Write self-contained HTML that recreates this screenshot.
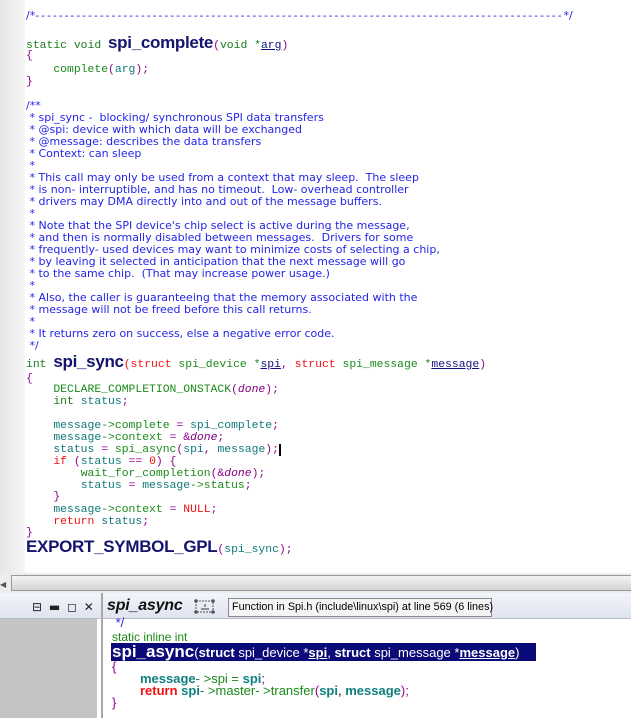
<!DOCTYPE html>
<html><head><meta charset="utf-8"><style>
*{margin:0;padding:0;box-sizing:border-box}
body{width:631px;height:718px;overflow:hidden;background:#fff;position:relative;font-family:"Liberation Mono",monospace}
.g{position:absolute;left:0;top:0;width:25px;height:573px;background:linear-gradient(90deg,#e6e6e6,#f6f6f6)}
.l{position:absolute;left:26px;height:12px;line-height:12px;white-space:pre;font-size:11.4px;font-family:"Liberation Mono",monospace}
.c{font-family:"DejaVu Sans",sans-serif;font-size:11px;color:#2424e8}
.fn{font-family:"Liberation Sans",sans-serif;font-weight:bold;font-size:17px;color:#14146e;letter-spacing:-0.3px}
.kw{color:#1a7a1a}.p{color:#900090}.gr{color:#1a8a1a}.t{color:#107878}.r{color:#f01010}.v{color:#800080;font-style:italic}.u{text-decoration:underline;color:#101080}
.b{position:absolute;font-family:"Liberation Sans",sans-serif;font-size:13px;white-space:pre;line-height:12px;left:112px}
</style></head><body>
<div class="g"></div>
<div class="l c" style="top:10px">/*<span style="letter-spacing:1.9px">------------------------------------------------------------------------------------------</span>*/</div>
<div class="l" style="top:37px"><span class="kw">static void </span><span class="fn">spi_complete</span><span class="p">(</span><span class="kw">void *</span><span class="u">arg</span><span class="p">)</span></div>
<div class="l p" style="top:50px">{</div>
<div class="l" style="top:64px">    <span class="gr">complete</span><span class="p">(</span><span class="t">arg</span><span class="p">);</span></div>
<div class="l p" style="top:76px">}</div>
<div class="l c" style="top:100px">/**</div>
<div class="l c" style="top:112px"> * spi_sync - &nbsp;blocking/ synchronous SPI data transfers</div>
<div class="l c" style="top:124px"> * @spi: device with which data will be exchanged</div>
<div class="l c" style="top:136px"> * @message: describes the data transfers</div>
<div class="l c" style="top:148px"> * Context: can sleep</div>
<div class="l c" style="top:160px"> *</div>
<div class="l c" style="top:172px"> * This call may only be used from a context that may sleep.  The sleep</div>
<div class="l c" style="top:184px"> * is non- interruptible, and has no timeout.  Low- overhead controller</div>
<div class="l c" style="top:196px"> * drivers may DMA directly into and out of the message buffers.</div>
<div class="l c" style="top:208px"> *</div>
<div class="l c" style="top:220px"> * Note that the SPI device's chip select is active during the message,</div>
<div class="l c" style="top:232px"> * and then is normally disabled between messages.  Drivers for some</div>
<div class="l c" style="top:244px"> * frequently- used devices may want to minimize costs of selecting a chip,</div>
<div class="l c" style="top:256px"> * by leaving it selected in anticipation that the next message will go</div>
<div class="l c" style="top:268px"> * to the same chip.  (That may increase power usage.)</div>
<div class="l c" style="top:280px"> *</div>
<div class="l c" style="top:292px"> * Also, the caller is guaranteeing that the memory associated with the</div>
<div class="l c" style="top:304px"> * message will not be freed before this call returns.</div>
<div class="l c" style="top:316px"> *</div>
<div class="l c" style="top:328px"> * It returns zero on success, else a negative error code.</div>
<div class="l c" style="top:340px"> */</div>
<div class="l" style="top:356px"><span class="kw">int </span><span class="fn">spi_sync</span><span class="r">(struct </span><span class="gr">spi_device *</span><span class="u">spi</span><span class="p">, </span><span class="r">struct </span><span class="gr">spi_message *</span><span class="u">message</span><span class="p">)</span></div>
<div class="l p" style="top:373px">{</div>
<div class="l" style="top:384px">    <span class="gr">DECLARE_COMPLETION_ONSTACK</span><span class="p">(</span><span class="v">done</span><span class="p">);</span></div>
<div class="l" style="top:396px">    <span class="kw">int </span><span class="t">status</span><span class="p">;</span></div>
<div class="l" style="top:420px">    <span class="t">message</span><span class="gr">-&gt;complete</span><span class="p"> = </span><span class="t">spi_complete</span><span class="p">;</span></div>
<div class="l" style="top:432px">    <span class="t">message</span><span class="gr">-&gt;context</span><span class="p"> = &amp;</span><span class="v">done</span><span class="p">;</span></div>
<div class="l" style="top:444px">    <span class="t">status</span><span class="p"> = </span><span class="gr">spi_async</span><span class="p">(</span><span class="t">spi</span><span class="p">, </span><span class="t">message</span><span class="p">);</span><span style="display:inline-block;width:2px;height:12px;background:#000;vertical-align:top"></span></div>
<div class="l" style="top:456px">    <span class="r">if </span><span class="p">(</span><span class="t">status</span><span class="p"> == </span><span class="r">0</span><span class="p">) {</span></div>
<div class="l" style="top:468px">        <span class="gr">wait_for_completion</span><span class="p">(&amp;</span><span class="v">done</span><span class="p">);</span></div>
<div class="l" style="top:480px">        <span class="t">status</span><span class="p"> = </span><span class="t">message</span><span class="gr">-&gt;status</span><span class="p">;</span></div>
<div class="l p" style="top:491px">    }</div>
<div class="l" style="top:504px">    <span class="t">message</span><span class="gr">-&gt;context</span><span class="p"> = </span><span class="r">NULL</span><span class="p">;</span></div>
<div class="l" style="top:516px">    <span class="r">return </span><span class="t">status</span><span class="p">;</span></div>
<div class="l p" style="top:527px">}</div>
<div class="l" style="top:541px"><span class="fn">EXPORT_SYMBOL_GPL</span><span class="p">(</span><span class="t">spi_sync</span><span class="p">);</span></div>

<div style="position:absolute;left:0;top:573px;width:631px;height:20px;background:#ececec"></div>
<div style="position:absolute;left:0;top:580px;font-size:8px;color:#555;font-family:'DejaVu Sans'">◀</div>
<div style="position:absolute;left:11px;top:575px;width:620px;height:16px;border:1px solid #999;border-right:none;background:linear-gradient(#f4f4f4,#d4d4d4)"></div>
<div style="position:absolute;left:0;top:593px;width:631px;height:26px;background:linear-gradient(#f2f4fa,#dfe4f0);border-bottom:1px solid #b8bcc8"></div>
<div style="position:absolute;left:0;top:619px;width:97px;height:99px;background:#c4c4c4"></div>
<div style="position:absolute;left:101px;top:593px;width:2px;height:125px;background:#a8a8a8"></div>
<div style="position:absolute;left:32px;top:600px;font-family:'DejaVu Sans';font-size:12px;color:#222;white-space:pre;word-spacing:3px">⊟ ▬ ◻ ✕</div>
<div style="position:absolute;left:107px;top:597px;font-family:'Liberation Sans';font-weight:bold;font-style:italic;font-size:16px;color:#111;letter-spacing:-0.2px">spi_async</div>
<svg style="position:absolute;left:194px;top:598px" width="22" height="18"><rect x="2" y="3" width="17" height="11" fill="none" stroke="#555" stroke-dasharray="2,1"/><circle cx="2" cy="3" r="1.8" fill="#555"/><circle cx="19" cy="3" r="1.8" fill="#555"/><circle cx="2" cy="14" r="1.8" fill="#555"/><circle cx="19" cy="14" r="1.8" fill="#555"/><path d="M7 11 L15 11 M11 6 L11 9" fill="none" stroke="#333"/></svg>
<div style="position:absolute;left:228px;top:598px;width:264px;height:19px;border:1px solid #8a8a8a;background:#f4f4f4;font-family:'Liberation Sans';font-size:10.8px;line-height:17px;padding-left:3px;white-space:pre;color:#000">Function in Spi.h (include\linux\spi) at line 569 (6 lines)</div>
<div class="b" style="top:617px;color:#2424e8"> */</div>
<div class="b" style="top:631px;color:#1a8a1a;font-size:12px">static inline int</div>
<div style="position:absolute;left:111px;top:643px;width:425px;height:18px;background:#0a0a78"></div>
<div class="b" style="top:646px;color:#fff;font-size:13px"><b style="font-size:17px">spi_async</b>(<b>struct</b> spi_device *<b style="text-decoration:underline">spi</b>, <b>struct</b> spi_message *<b style="text-decoration:underline">message</b>)</div>
<div class="b" style="top:661px;color:#900090">{</div>
<div class="b" style="top:673px;left:140px"><b style="color:#108080">message</b><span style="color:#1a8a1a">- &gt;spi = </span><b style="color:#108080">spi</b><span style="color:#900090">;</span></div>
<div class="b" style="top:685px;left:140px"><b style="color:#f01010">return </b><b style="color:#108080">spi</b><span style="color:#1a8a1a">- &gt;master- &gt;transfer</span><span style="color:#900090">(</span><b style="color:#108080">spi</b>, <b style="color:#108080">message</b><span style="color:#900090">);</span></div>
<div class="b" style="top:697px;color:#900090">}</div>
</body></html>
